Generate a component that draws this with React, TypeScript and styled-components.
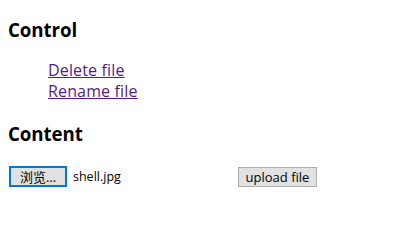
import React from "react";
import styled, { createGlobalStyle } from "styled-components";

const Global = createGlobalStyle`
  body {
    margin: 8px;
    background: #fff;
    color: #000;
    font-family: "Open Sans", "Noto Sans CJK SC", sans-serif;
  }
`;

const Heading = styled.h3<{ $first?: boolean }>`
  font-size: 18.72px;
  font-weight: 700;
  margin: ${(p) => (p.$first ? "8.72px" : "18.72px")} 0 18.72px;
  letter-spacing: -0.1px;
`;

const LinkList = styled.ul`
  list-style: none;
  margin: 16px 0;
  padding-left: 40px;
  font-size: 16px;
  line-height: 21px;
  letter-spacing: 0.15px;
`;

const FileLink = styled.a`
  color: #551a8b;
  text-decoration: underline;
`;

const Form = styled.form`
  display: flex;
  align-items: center;
  margin-top: 20px;
  font-size: 13px;
  font-family: "Open Sans", "Noto Sans CJK SC", sans-serif;
`;

const FilePicker = styled.div`
  display: flex;
  align-items: center;
  width: 229px;
  margin-left: 1px;
  gap: 6px;
`;

const Button = styled.button<{ $focused?: boolean; $w: number }>`
  font: inherit;
  height: ${(p) => (p.$focused ? "21px" : "20px")};
  width: ${(p) => p.$w}px;
  padding: 0;
  background: #e1e1e1;
  border: ${(p) => (p.$focused ? "2px solid #0078d7" : "1px solid #adadad")};
  border-radius: 0;
  color: #000;
  display: flex;
  align-items: center;
  justify-content: center;
  flex-shrink: 0;
`;

const FileName = styled.span`
  font-size: 12.5px;
`;

export default function App() {
  return (
    <>
      <Global />
      <Heading $first>Control</Heading>
      <LinkList>
        <li>
          <FileLink href="#">Delete file</FileLink>
        </li>
        <li>
          <FileLink href="#">Rename file</FileLink>
        </li>
      </LinkList>
      <Heading>Content</Heading>
      <Form onSubmit={(e) => e.preventDefault()}>
        <FilePicker>
          <Button type="button" $focused $w={58}>
            浏览...
          </Button>
          <FileName>shell.jpg</FileName>
        </FilePicker>
        <Button type="submit" $w={79}>
          upload file
        </Button>
      </Form>
    </>
  );
}
